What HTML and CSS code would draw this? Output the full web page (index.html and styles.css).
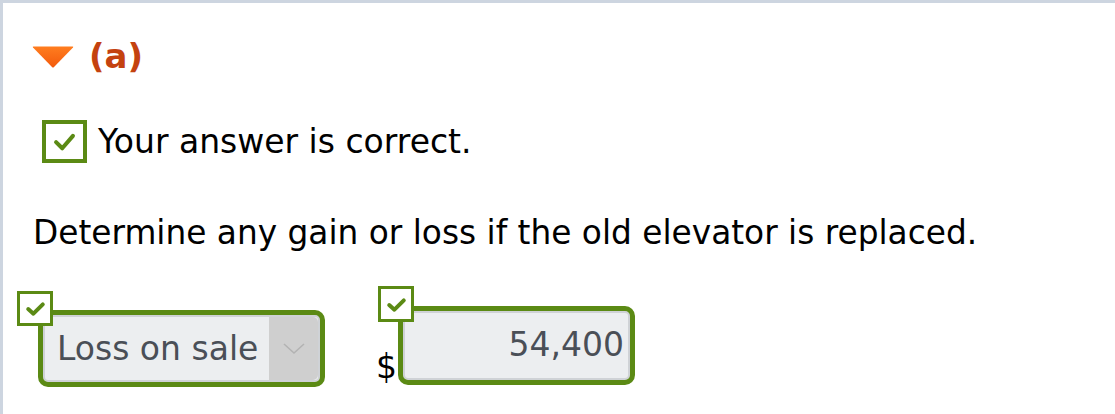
FILE: index.html
```html
<!DOCTYPE html>
<html lang="en">
<head>
<meta charset="utf-8">
<title>Part (a)</title>
<link rel="stylesheet" href="styles.css">
</head>
<body>
<section class="part">
  <header class="part-head">
    <svg class="toggle" width="42" height="22" viewBox="0 0 42 22" aria-hidden="true">
      <defs>
        <linearGradient id="tri" x1="0" y1="0" x2="0" y2="1">
          <stop offset="0" stop-color="#ff7d1f"/>
          <stop offset="1" stop-color="#f35a0c"/>
        </linearGradient>
      </defs>
      <path d="M1.5 0.5 H40.5 Q41.8 0.5 41 1.6 L22 21 Q21 22 20 21 L1 1.6 Q0.2 0.5 1.5 0.5 Z" fill="url(#tri)"/>
    </svg>
    <span class="part-label">(a)</span>
  </header>

  <div class="feedback">
    <span class="check check-lg">
      <svg viewBox="0 0 24 24" width="27" height="27" aria-hidden="true"><path d="M4.5 12.5 L10 18 L19.5 7" fill="none" stroke="#5b8a14" stroke-width="3.6" stroke-linecap="round" stroke-linejoin="round"/></svg>
    </span>
    <span class="feedback-text">Your answer is correct.</span>
  </div>

  <p class="question">Determine any gain or loss if the old elevator is replaced.</p>

  <div class="answers">
    <div class="field field-select">
      <span class="check check-sm">
        <svg viewBox="0 0 24 24" width="25" height="25" aria-hidden="true"><path d="M5 12.5 L10 17 L19 8" fill="none" stroke="#5b8a14" stroke-width="3.8" stroke-linecap="round" stroke-linejoin="round"/></svg>
      </span>
      <div class="select">
        <span class="select-value">Loss on sale</span>
        <span class="select-arrow">
          <svg viewBox="0 0 24 14" width="24" height="14" aria-hidden="true"><path d="M2 2 L12 11 L22 2" fill="none" stroke="#b3b3b3" stroke-width="1.6"/></svg>
        </span>
      </div>
    </div>

    <span class="currency">$</span>
    <div class="field field-input">
      <span class="check check-sm">
        <svg viewBox="0 0 24 24" width="25" height="25" aria-hidden="true"><path d="M5 12.5 L10 17 L19 8" fill="none" stroke="#5b8a14" stroke-width="3.8" stroke-linecap="round" stroke-linejoin="round"/></svg>
      </span>
      <div class="input">54,400</div>
    </div>
  </div>
</section>
</body>
</html>
```

FILE: styles.css
```css
html, body {
  margin: 0;
  padding: 0;
  background: #ffffff;
}

body {
  font-family: "DejaVu Sans", Verdana, sans-serif;
  color: #000;
  width: 1115px;
  height: 414px;
  overflow: hidden;
}

.part {
  border-top: 3px solid #cdd5e0;
  border-left: 3px solid #cdd5e0;
  padding: 0 0 0 30px;
  height: 411px;
}

/* part heading with collapse triangle */
.part-head {
  display: flex;
  align-items: center;
  height: 32px;
  margin-top: 37px;
  margin-left: -1px;
}

.toggle {
  display: block;
  margin-top: 1px;
}

.part-label {
  margin-left: 15px;
  font-weight: bold;
  font-size: 34px;
  color: #c4420f;
  line-height: 32px;
}

/* correctness feedback */
.feedback {
  display: flex;
  align-items: center;
  margin-top: 48px;
  margin-left: 9px;
  height: 43px;
}

.check {
  display: flex;
  align-items: center;
  justify-content: center;
  box-sizing: border-box;
  background: #fff;
  border: 3px solid #5b8a14;
}

.check-lg {
  width: 45px;
  height: 43px;
  border-width: 4px;
}

.feedback-text {
  margin-left: 11px;
  font-size: 33px;
  line-height: 43px;
}

.question {
  margin: 50px 0 0 0;
  font-size: 32.8px;
  line-height: 40px;
}

/* answer fields */
.answers {
  display: flex;
  align-items: flex-start;
  margin-top: 53px;
}

.field {
  position: relative;
}

.field .check-sm {
  position: absolute;
  width: 36px;
  height: 35px;
  z-index: 1;
}

.field-select {
  margin-top: 4px;
  margin-left: 5px;
}

.field-select .check-sm {
  left: -21px;
  top: -19px;
}

.select {
  display: flex;
  box-sizing: border-box;
  width: 287px;
  height: 77px;
  border: 5px solid #5b8a14;
  border-radius: 10px;
  background: #eceef0;
  box-shadow: inset 0 0 0 2px #cfd2d6;
  padding: 2px;
  overflow: hidden;
}

.select-value {
  flex: 1;
  padding-left: 12px;
  font-size: 33px;
  line-height: 64px;
  color: #4a4f57;
  white-space: nowrap;
}

.select-arrow {
  display: flex;
  align-items: center;
  justify-content: center;
  width: 49px;
  background: #cfcfcf;
  border-radius: 0 5px 5px 0;
}

.currency {
  margin-left: 51px;
  margin-top: 41px;
  font-size: 33px;
  line-height: 40px;
}

.field-input {
  margin-left: 1px;
}

.field-input .check-sm {
  left: -20px;
  top: -20px;
  height: 36px;
}

.input {
  box-sizing: border-box;
  width: 237px;
  height: 79px;
  border: 5px solid #5b8a14;
  border-radius: 10px;
  background: #eceef0;
  box-shadow: inset 0 0 0 2px #cfd2d6;
  padding: 0 6px 0 0;
  text-align: right;
  font-size: 33px;
  line-height: 68px;
  color: #4a4f57;
}
```
